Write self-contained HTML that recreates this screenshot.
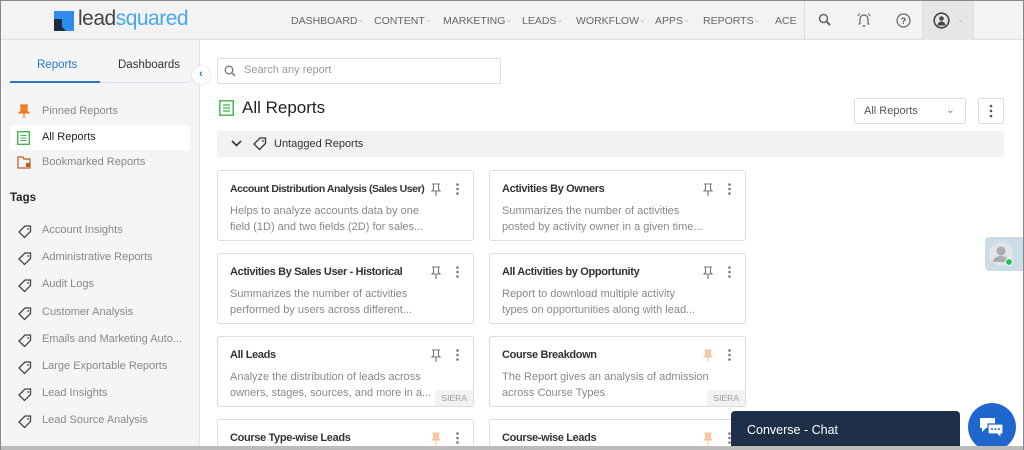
<!DOCTYPE html>
<html style="height:450px;overflow:hidden"><head><style>
*{box-sizing:border-box;margin:0;padding:0}
body{width:1024px;height:450px;overflow:hidden;font-family:"Liberation Sans",sans-serif;background:#fff;position:relative}
.hdr{position:absolute;left:0;top:0;width:1024px;height:40px;background:#f3f3f3;border-bottom:1px solid #ddd}
.nav{position:absolute;top:15px;font-size:10.5px;color:#666}
.nav span{position:absolute;white-space:nowrap}
.car{color:#bbb;font-size:8px}
.side{position:absolute;left:0;top:40px;width:200px;height:410px;background:#f4f5f7;border-right:1px solid #e2e2e2}
.abs{position:absolute;white-space:nowrap}
.card{position:absolute;width:257px;height:71px;border:1px solid #dcdcdc;border-radius:3px;background:#fff}
.card .t{position:absolute;left:12px;top:12px;font-size:11px;font-weight:bold;color:#333;letter-spacing:-.35px}
.card .d{position:absolute;left:12px;top:32px;font-size:11px;color:#888;line-height:16px}
.card .p{position:absolute;right:32px;top:12px}
.siera{position:absolute;right:0;bottom:0;background:#f2f2f2;color:#999;font-size:8.5px;padding:3px 6px}
.tag{position:absolute;left:42px;font-size:11px;color:#888}
</style></head><body>
<div class="hdr">
 <svg class="abs" style="left:54px;top:11px" width="20" height="20"><rect width="20" height="20" fill="#2d8cf0"/><path d="M0 8 L12 20 L0 20Z" fill="#1d2940"/><path d="M0 8 L8 8 L8 16Z" fill="#1d2940"/></svg>
 <div class="abs" style="left:78px;top:7px;font-size:21px;color:#444;letter-spacing:-.5px">lead<span style="color:#49a6f0">squared</span></div>
 <div class="nav">
 <span style="left:291px">DASHBOARD <span class="car">⌄</span></span>
 <span style="left:374px">CONTENT <span class="car">⌄</span></span>
 <span style="left:443px">MARKETING <span class="car">⌄</span></span>
 <span style="left:522px">LEADS <span class="car">⌄</span></span>
 <span style="left:576px">WORKFLOW <span class="car">⌄</span></span>
 <span style="left:655px">APPS <span class="car">⌄</span></span>
 <span style="left:703px">REPORTS <span class="car">⌄</span></span>
 <span style="left:775px">ACE</span>
 </div>
 <div class="abs" style="left:804px;top:0;width:1px;height:40px;background:#ddd"></div>
 <svg class="abs" style="left:818px;top:13px" width="14" height="14"><circle cx="5.5" cy="5.5" r="4" fill="none" stroke="#666" stroke-width="1.5"/><path d="M8.5 8.5L12 12" stroke="#666" stroke-width="2"/></svg>
 <svg class="abs" style="left:856px;top:12px" width="16" height="16"><path d="M4 12V7a4 4 0 0 1 8 0v5h1.5M2.5 12h1.5M6.5 14h3" fill="none" stroke="#666" stroke-width="1.2"/><path d="M2 4a6 6 0 0 1 2-2.5M14 4a6 6 0 0 0-2-2.5" fill="none" stroke="#666"/></svg>
 <svg class="abs" style="left:896px;top:13px" width="15" height="15"><circle cx="7.5" cy="7.5" r="6.5" fill="none" stroke="#666" stroke-width="1.2"/><text x="7.5" y="11" font-size="9" font-weight="bold" text-anchor="middle" fill="#555" font-family="Liberation Sans">?</text></svg>
 <div class="abs" style="left:922px;top:0;width:52px;height:40px;background:#e6e6e6;border-left:1px solid #ddd;border-right:1px solid #ddd"></div>
 <svg class="abs" style="left:933px;top:12px" width="17" height="17"><circle cx="8.5" cy="8.5" r="7.3" fill="none" stroke="#444" stroke-width="1.6"/><circle cx="8.5" cy="6.5" r="2.3" fill="#444"/><path d="M4.5 13.5a4 4 0 0 1 8 0" fill="#444"/></svg>
 <span class="abs car" style="left:957px;top:15px">⌄</span>
</div>
<div class="side">
 <div class="abs" style="left:37px;top:19px;font-size:11.5px;color:#2a75c9">Reports</div>
 <div class="abs" style="left:118px;top:19px;font-size:11.5px;color:#333">Dashboards</div>
 <div class="abs" style="left:10px;top:42px;width:180px;height:1px;background:#dde"></div>
 <div class="abs" style="left:10px;top:41px;width:90px;height:2px;background:#2a75c9"></div>
 <svg class="abs" style="left:18px;top:64px" width="12" height="14"><path d="M2 1h8M3 1v6l-2 2h10l-2-2V1M6 9v5" fill="#f07d22" stroke="#f07d22" stroke-width="1.2"/></svg>
 <div class="abs" style="left:42px;top:65px;font-size:11px;color:#888">Pinned Reports</div>
 <div class="abs" style="left:10px;top:85px;width:180px;height:25px;background:#fff;border-radius:2px"></div>
 <svg class="abs" style="left:17px;top:91px" width="13" height="14"><rect x=".7" y=".7" width="11.6" height="12.6" fill="none" stroke="#3ab24a" stroke-width="1.3"/><path d="M3.5 4.5h6M3.5 7h6M3.5 9.5h6" stroke="#3ab24a"/></svg>
 <div class="abs" style="left:42px;top:91px;font-size:11px;color:#222">All Reports</div>
 <svg class="abs" style="left:17px;top:116px" width="15" height="13"><path d="M1 1h5l1 2h6v9H1z" fill="none" stroke="#c2571a" stroke-width="1.2"/><rect x="9" y="7" width="4" height="4" fill="#c2571a"/></svg>
 <div class="abs" style="left:42px;top:116px;font-size:11px;color:#888">Bookmarked Reports</div>
 <div class="abs" style="left:10px;top:152px;font-size:11.5px;font-weight:bold;color:#222">Tags</div>
</div>
<div id="tags"></div>
<div class="abs" style="left:192px;top:66px;width:18px;height:18px;border-radius:50%;background:#fff;box-shadow:0 0 2px #ccc;color:#2a75c9;font-size:11px;text-align:center;line-height:17px;font-weight:bold">‹</div>
<div class="abs" style="left:217px;top:58px;width:284px;height:26px;border:1px solid #ddd;border-radius:2px"></div>
<svg class="abs" style="left:224px;top:65px" width="12" height="12"><circle cx="5" cy="5" r="3.8" fill="none" stroke="#777" stroke-width="1.3"/><path d="M8 8l3 3" stroke="#777" stroke-width="1.4"/></svg>
<div class="abs" style="left:244px;top:64px;font-size:11px;color:#999">Search any report</div>
<svg class="abs" style="left:219px;top:100px" width="15" height="16"><rect x=".8" y=".8" width="13.4" height="14.4" fill="none" stroke="#3ab24a" stroke-width="1.4"/><path d="M4 5h7M4 8h7M4 11h7" stroke="#3ab24a" stroke-width="1.2"/></svg>
<div class="abs" style="left:242px;top:98px;font-size:17px;color:#222">All Reports</div>
<div class="abs" style="left:854px;top:98px;width:112px;height:26px;border:1px solid #ddd;border-radius:2px;font-size:11px;color:#555;padding:6px 9px">All Reports<span style="position:absolute;right:10px;top:4px;color:#888">⌄</span></div>
<div class="abs" style="left:978px;top:98px;width:26px;height:26px;border:1px solid #ddd;border-radius:2px"></div>
<svg class="abs" style="left:989px;top:104px" width="4" height="14"><circle cx="2" cy="2" r="1.3" fill="#555"/><circle cx="2" cy="7" r="1.3" fill="#555"/><circle cx="2" cy="12" r="1.3" fill="#555"/></svg>
<div class="abs" style="left:217px;top:131px;width:787px;height:26px;background:#f1f2f4"></div>
<svg class="abs" style="left:231px;top:140px" width="11" height="8"><path d="M1 1l4.5 4.5L10 1" fill="none" stroke="#333" stroke-width="1.6"/></svg>
<svg class="abs" style="left:253px;top:137px" width="14" height="14"><path d="M1 7L7 1h5.5v5.5L6.5 12.5z" fill="none" stroke="#333" stroke-width="1.3"/><circle cx="10" cy="4" r=".9" fill="#333"/></svg>
<div class="abs" style="left:274px;top:138px;font-size:11px;color:#333">Untagged Reports</div>
<div id="cards"></div>
<div class="abs" style="left:985px;top:237px;width:40px;height:34px;background:#cadce7;border-radius:4px 0 0 4px"></div>
<svg class="abs" style="left:988px;top:241px" width="28" height="28"><circle cx="13" cy="13" r="12" fill="#e2e4e7"/><circle cx="13" cy="10" r="4.5" fill="#a9adb3"/><path d="M5 21a8 6 0 0 1 16 0z" fill="#a9adb3"/><circle cx="21" cy="21" r="3.5" fill="#21c45a" stroke="#fff"/></svg>
<div class="abs" style="left:731px;top:411px;width:229px;height:40px;background:#1e2f4a;border-radius:4px 4px 0 0"></div>
<div class="abs" style="left:747px;top:423px;font-size:12.5px;color:#fff">Converse - Chat</div>
<div class="abs" style="left:968px;top:403px;width:48px;height:48px;border-radius:50%;background:#1f67cf"></div>
<svg class="abs" style="left:978px;top:416px" width="28" height="24"><path d="M2 2h15v10H8l-4 4v-4H2z" fill="#fff"/><path d="M10 8h15v10h-2v4l-4-4h-9z" fill="#fff" stroke="#1f67cf" stroke-width="1.2"/><circle cx="14" cy="13" r="1" fill="#1f67cf"/><circle cx="17.5" cy="13" r="1" fill="#1f67cf"/><circle cx="21" cy="13" r="1" fill="#1f67cf"/></svg>
<div class="abs" style="left:0;top:446px;width:1024px;height:4px;background:#bbb"></div>
<div class="abs" style="left:0;top:0;width:1024px;height:450px;border:1px solid #888;border-bottom:none"></div>
<script>
var tags=["Account Insights","Administrative Reports","Audit Logs","Customer Analysis","Emails and Marketing Auto...","Large Exportable Reports","Lead Insights","Lead Source Analysis"];
var h="";tags.forEach(function(t,i){var y=224+i*27.2;
h+='<svg class="abs" style="left:18px;top:'+(y+1)+'px" width="14" height="14"><path d="M1 7L7 1h5.5v5.5L6.5 12.5z" fill="none" stroke="#444" stroke-width="1.3"/><circle cx="10" cy="4" r=".9" fill="#444"/></svg><div class="tag" style="top:'+y+'px">'+t+'</div>';});
document.getElementById("tags").innerHTML=h;
var c=[["Account Distribution Analysis (Sales User)","Helps to analyze accounts data by one<br>field (1D) and two fields (2D) for sales...",0,0],
["Activities By Owners","Summarizes the number of activities<br>posted by activity owner in a given time...",0,0],
["Activities By Sales User - Historical","Summarizes the number of activities<br>performed by users across different...",0,0],
["All Activities by Opportunity","Report to download multiple activity<br>types on opportunities along with lead...",0,0],
["All Leads","Analyze the distribution of leads across<br>owners, stages, sources, and more in a...",0,1],
["Course Breakdown","The Report gives an analysis of admission<br>across Course Types",1,1],
["Course Type-wise Leads","",1,0],["Course-wise Leads","",1,0]];
h="";c.forEach(function(o,i){var x=i%2?489:217,y=170+Math.floor(i/2)*83;var col=o[2]?"#f7c7a3":"#777";
h+='<div class="card" style="left:'+x+'px;top:'+y+'px;'+(i>5?'height:28px;border-bottom:none':'')+'"><div class="t"'+(i==0?' style="font-size:10.5px;letter-spacing:-.45px"':'')+'>'+o[0]+'</div><div class="d">'+o[1]+'</div>'+
'<svg class="p" width="10" height="13"><path d="M1 1h8M2.5 1v5.5L1 8h8L7.5 6.5V1M5 8v5" fill="'+(o[2]?col:'none')+'" stroke="'+col+'" stroke-width="1.1"/></svg>'+
'<svg style="position:absolute;right:14px;top:12px" width="3" height="12"><circle cx="1.5" cy="1.5" r="1.3" fill="#777"/><circle cx="1.5" cy="6" r="1.3" fill="#777"/><circle cx="1.5" cy="10.5" r="1.3" fill="#777"/></svg>'+
(o[3]?'<div class="siera">SIERA</div>':'')+'</div>';});
document.getElementById("cards").innerHTML=h;
</script>
</body></html>
